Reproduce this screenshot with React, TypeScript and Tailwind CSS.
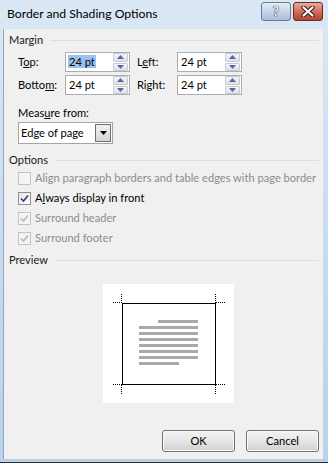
import React from 'react';

const font = { fontFamily: 'Lato, "Segoe UI", "Liberation Sans", sans-serif' };

function Spin() {
  return (
    <div className="flex flex-col w-[15px] h-[18px] mr-[1px] gap-[1px]">
      {[0, 1].map((i) => (
        <div
          key={i}
          className="flex-1 flex items-center justify-center border border-[#c6cad1] rounded-[1px] bg-gradient-to-b from-[#f4f5f7] to-[#dde0e5]"
        >
          <svg width="7" height="4" viewBox="0 0 7 4">
            {i === 0 ? (
              <polygon points="0,4 3.5,0 7,4" fill="#5566a0" />
            ) : (
              <polygon points="0,0 3.5,4 7,0" fill="#5566a0" />
            )}
          </svg>
        </div>
      ))}
    </div>
  );
}

function NumField({ value, selected }: { value: string; selected?: boolean }) {
  return (
    <div className="w-[65px] h-[20px] border border-[#abadb3] bg-white flex items-center justify-between">
      <span className="pl-[2px] leading-[14px] whitespace-nowrap">
        <span className={selected ? 'bg-[#99c2ee] px-[1px]' : 'px-[1px]'}>{value}</span>
      </span>
      <Spin />
    </div>
  );
}

function Group({ title }: { title: string }) {
  return (
    <div className="h-[16px] flex items-center pl-[5px] pr-[4px]">
      <span className="text-[#1a1a1a] whitespace-nowrap">{title}</span>
      <div className="flex-1 h-px bg-[#d5dfe5] ml-[7px]" />
    </div>
  );
}

function Check({ label, checked, disabled }: { label: React.ReactNode; checked?: boolean; disabled?: boolean }) {
  return (
    <div className="h-[20px] flex items-center pl-[14px]">
      <div
        className={`w-[13px] h-[13px] shrink-0 border flex items-center justify-center ${
          disabled ? 'border-[#c4c4c4] bg-[#f4f4f4]' : 'border-[#8e8f8f] bg-gradient-to-br from-[#e4e4e4] to-[#ffffff]'
        }`}
      >
        {checked && (
          <svg width="9" height="9" viewBox="0 0 9 9">
            <path
              d="M1 4.5 L3.5 7 L8 1.5"
              fill="none"
              stroke={disabled ? '#b8b8b8' : '#2a3a8c'}
              strokeWidth="1.6"
            />
          </svg>
        )}
      </div>
      <span className={`ml-[4px] whitespace-nowrap ${disabled ? 'text-[#8d8d8d]' : 'text-black'}`}>{label}</span>
    </div>
  );
}

function Preview() {
  const full = [42, 48, 54, 60, 66, 72];
  return (
    <svg width="131" height="119" viewBox="0 0 131 119" className="block">
      <rect x="0" y="0" width="131" height="119" fill="#ffffff" />
      <rect x="19.5" y="19.5" width="93" height="81" fill="none" stroke="#000" strokeWidth="1" />
      <g stroke="#000" strokeWidth="1" strokeDasharray="1 1">
        <line x1="10" y1="18.5" x2="19" y2="18.5" />
        <line x1="18.5" y1="10" x2="18.5" y2="19" />
        <line x1="113" y1="18.5" x2="122" y2="18.5" />
        <line x1="112.5" y1="10" x2="112.5" y2="19" />
        <line x1="10" y1="100.5" x2="19" y2="100.5" />
        <line x1="18.5" y1="101" x2="18.5" y2="110" />
        <line x1="113" y1="100.5" x2="122" y2="100.5" />
        <line x1="112.5" y1="101" x2="112.5" y2="110" />
      </g>
      <g fill="#a9a9a9">
        <rect x="55" y="36" width="40" height="3" />
        {full.map((y) => (
          <rect key={y} x="36" y={y} width="59" height="3" />
        ))}
        <rect x="36" y="78" width="40" height="3" />
      </g>
    </svg>
  );
}

function Button({ children }: { children: React.ReactNode }) {
  return (
    <div className="w-[73px] h-[22px] rounded-[3px] border border-[#707070] bg-gradient-to-b from-[#f2f2f2] via-[#e6e6e6] to-[#d0d0d0] flex items-center justify-center shadow-[inset_0_0_0_1px_#fbfbfb]">
      {children}
    </div>
  );
}

export default function App() {
  return (
    <div
      className="w-[328px] h-[463px] flex flex-col bg-gradient-to-b from-[#dbe7f4] to-[#b9d1ea] border-b border-[#2d2d2d] text-[11.1px] text-black overflow-hidden"
      style={font}
    >
      {/* title bar */}
      <div className="h-[29px] flex items-start justify-between pl-[7px] pr-[5px]">
        <span className="mt-[6px] text-[12.2px] leading-[16px] text-black whitespace-nowrap">Border and Shading Options</span>
        <div className="flex mt-[2px] gap-[2px]">
          <div className="w-[30px] h-[19px] rounded-[3px] border border-[#6d7b8d] bg-gradient-to-b from-[#e4edf7] via-[#c6d6ea] to-[#a8bdd8] flex items-center justify-center">
            <span className="text-white font-bold text-[13px] leading-none [text-shadow:0_0_1px_#263850,0_0_1px_#263850,0_0_1px_#263850]">?</span>
          </div>
          <div className="w-[30px] h-[19px] rounded-[3px] border border-[#6b2b22] bg-gradient-to-b from-[#e9a99c] via-[#d36d5c] to-[#b8432f] flex items-center justify-center">
            <svg width="14" height="11" viewBox="0 0 14 11">
              <path d="M2.5 1.5 L11.5 9.5 M11.5 1.5 L2.5 9.5" stroke="#3a1a14" strokeWidth="4.2" strokeLinecap="round" />
              <path d="M2.5 1.5 L11.5 9.5 M11.5 1.5 L2.5 9.5" stroke="#ffffff" strokeWidth="2.2" strokeLinecap="round" />
            </svg>
          </div>
        </div>
      </div>

      {/* client area */}
      <div className="flex-1 ml-[3px] mr-[5px] mb-[3px] bg-[#f0f0f0] border-l border-[#8ea6c2] flex flex-col pt-[3px]">
        <Group title="Margin" />

        <div className="mt-[4px] flex flex-col gap-[3px] pl-[14px]">
          <div className="flex items-center h-[20px]">
            <span className="w-[47px]">T<u>o</u>p:</span>
            <NumField value="24 pt" selected />
            <span className="w-[40px] ml-[7px]">L<u>e</u>ft:</span>
            <NumField value="24 pt" />
          </div>
          <div className="flex items-center h-[20px]">
            <span className="w-[47px]">Botto<u>m</u>:</span>
            <NumField value="24 pt" />
            <span className="w-[40px] ml-[7px]">Ri<u>g</u>ht:</span>
            <NumField value="24 pt" />
          </div>
        </div>

        <div className="mt-[10px] h-[16px] flex items-center pl-[14px]">
          Meas<u>u</u>re from:
        </div>
        <div className="mt-[1px] ml-[14px] w-[95px] h-[22px] border border-[#a5a5a5] bg-white flex items-center justify-between">
          <span className="pl-[2px] whitespace-nowrap">Edge of page</span>
          <div className="w-[16px] h-[18px] mr-[1px] border border-[#707070] bg-gradient-to-b from-[#f2f2f2] to-[#d4d4d4] flex items-center justify-center">
            <svg width="7" height="4" viewBox="0 0 7 4">
              <polygon points="0,0 7,0 3.5,4" fill="#000" />
            </svg>
          </div>
        </div>

        <div className="mt-[8px]">
          <Group title="Options" />
        </div>
        <Check label="Align paragraph borders and table edges with page border" disabled />
        <Check label={<>A<u>l</u>ways display in front</>} checked />
        <Check label="Surround header" checked disabled />
        <Check label="Surround footer" checked disabled />

        <div className="mt-[4px]">
          <Group title="Preview" />
        </div>

        <div className="mt-[16px] flex pl-[99px]">
          <Preview />
        </div>

        <div className="mt-[27px] flex justify-end gap-[11px] pr-[4px]">
          <Button>OK</Button>
          <Button>Cancel</Button>
        </div>
      </div>
    </div>
  );
}
